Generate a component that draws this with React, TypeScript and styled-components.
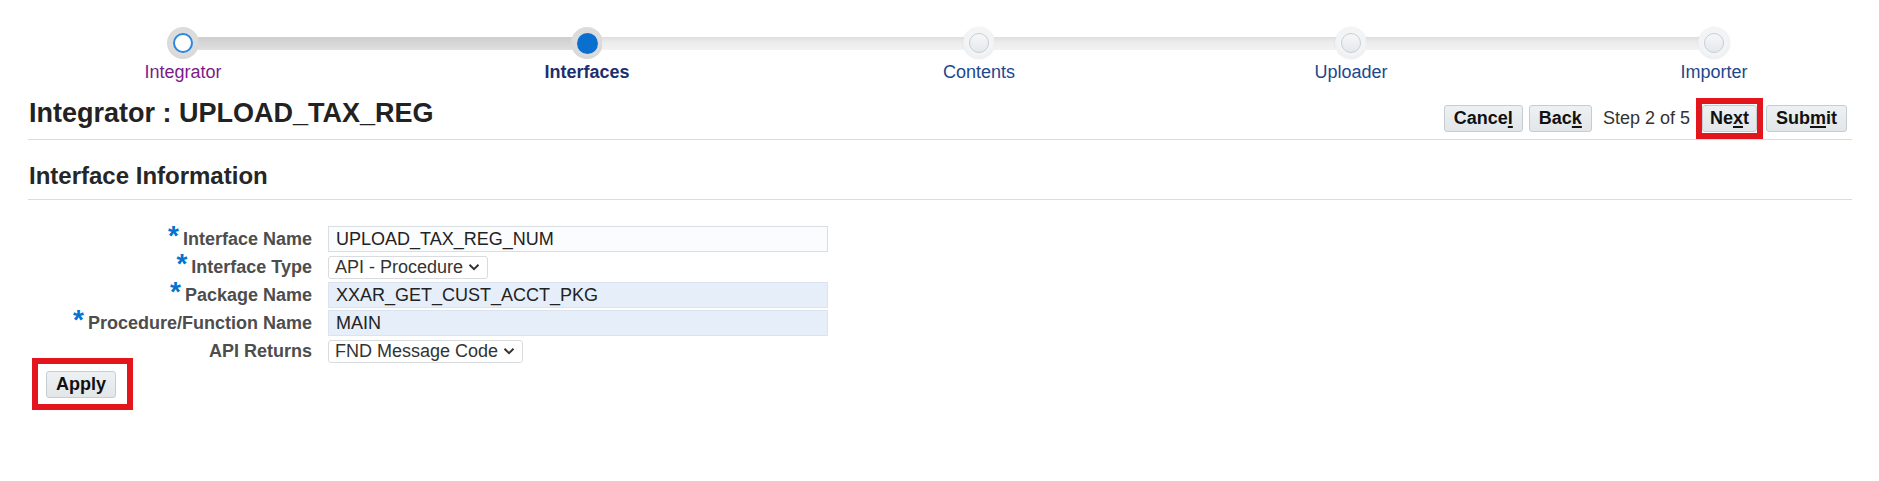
import React from "react";
import styled, { createGlobalStyle, css } from "styled-components";

const GlobalStyle = createGlobalStyle`
  html, body { margin: 0; padding: 0; background: #ffffff; }
  body { font-family: "Liberation Sans", Arial, sans-serif; color: #222; }
  * { box-sizing: border-box; }
`;

type StepState = "visited" | "current" | "future";

const Page = styled.div`
  padding: 0 27px 0 28px;
`;

const Train = styled.div`
  display: flex;
  align-items: flex-start;
  padding-top: 27px;
  margin-left: 139px;
`;

const Step = styled.div`
  display: flex;
  flex-direction: column;
  align-items: center;
  width: 32px;
  flex: none;
`;

const Knob = styled.div<{ $state: StepState }>`
  width: 32px;
  height: 32px;
  border-radius: 50%;
  display: flex;
  align-items: center;
  justify-content: center;
  ${(p) =>
    p.$state === "future"
      ? css`
          background: radial-gradient(circle at 50% 45%, #f3f4f5 55%, #e3e5e7 100%);
          box-shadow: 0 0 2px rgba(0, 0, 0, 0.08);
        `
      : css`
          background: radial-gradient(circle at 50% 45%, #dcdcdc 55%, #cfcfcf 100%);
        `}
`;

const Dot = styled.div<{ $state: StepState }>`
  border-radius: 50%;
  ${(p) =>
    p.$state === "visited"
      ? css`
          width: 20px;
          height: 20px;
          background: #ffffff;
          border: 2px solid #2d87e2;
        `
      : p.$state === "current"
      ? css`
          width: 21px;
          height: 21px;
          background: #0b6fd0;
        `
      : css`
          width: 20px;
          height: 20px;
          background: linear-gradient(#f6f7f9, #e4e8ec);
          border: 1px solid #c9ced4;
        `}
`;

const StepLabel = styled.div<{ $state: StepState }>`
  margin-top: 3px;
  font-size: 18px;
  line-height: 21px;
  white-space: nowrap;
  font-weight: ${(p) => (p.$state === "current" ? 700 : 400)};
  color: ${(p) =>
    p.$state === "visited" ? "#7a1d89" : p.$state === "current" ? "#1b2f6d" : "#21478c"};
`;

const Connector = styled.div<{ $done: boolean; $w: number }>`
  flex: none;
  width: ${(p) => p.$w}px;
  height: 32px;
  display: flex;
  align-items: center;
  margin: 0 -1px;
  &::before {
    content: "";
    display: block;
    width: 100%;
    height: 13px;
    background: ${(p) =>
      p.$done
        ? "linear-gradient(#cfcfcf, #d8d8d8 60%, #e0e0e0)"
        : "linear-gradient(#dedede, #ececec 40%, #f2f2f2)"};
  }
`;

const HeaderRow = styled.div`
  display: flex;
  align-items: flex-end;
  justify-content: space-between;
  margin-top: 15px;
  border-bottom: 1px solid #dcdcdc;
`;

const Title = styled.h1`
  margin: 0 0 10px 1px;
  font-size: 27px;
  line-height: 31px;
  font-weight: 700;
  color: #222222;
`;

const Toolbar = styled.div`
  display: flex;
  align-items: center;
  gap: 6px;
  margin-right: 5px;
`;

const Button = styled.button<{ $tight?: boolean }>`
  font-family: "Liberation Sans", Arial, sans-serif;
  font-size: 18px;
  font-weight: 700;
  line-height: 25px;
  padding: 0 ${(p) => (p.$tight ? "7px" : "9px")};
  border: 1px solid #c4cdd4;
  border-radius: 3px;
  background: linear-gradient(#eef1f3, #e2e6e9);
  color: #111111;
  cursor: pointer;
  white-space: nowrap;
  u { text-decoration-thickness: 2px; text-underline-offset: 2px; }
`;

const StepText = styled.span`
  margin-left: 5px;
  font-size: 18px;
  color: #333333;
  white-space: nowrap;
`;

const Highlight = styled.div<{ $pad: string }>`
  display: inline-flex;
  border: 6px solid #e3161e;
  padding: ${(p) => p.$pad};
`;

const NextBox = styled(Highlight)`
  margin-right: -3px;
`;

const ApplyBox = styled(Highlight)`
  margin: -7px 0 0 4px;
`;

const SectionTitle = styled.h2`
  margin: 22px 0 0 0;
  padding: 0 0 9px 1px;
  font-size: 24px;
  line-height: 28px;
  font-weight: 700;
  color: #262626;
  border-bottom: 1px solid #dcdcdc;
`;

const Form = styled.div`
  display: grid;
  grid-template-columns: 284px 500px;
  grid-auto-rows: 28px;
  column-gap: 16px;
  align-items: center;
  margin-top: 25px;
`;

const Label = styled.label`
  text-align: right;
  font-size: 18px;
  font-weight: 700;
  line-height: 28px;
  color: #4d4d4d;
  white-space: nowrap;
`;

const Req = styled.span`
  font-size: 28px;
  line-height: 0;
  color: #0572ce;
  margin-right: 4px;
`;

const TextInput = styled.input<{ $locked?: boolean }>`
  width: 500px;
  height: 26px;
  padding: 0 7px;
  font-family: "Liberation Sans", Arial, sans-serif;
  font-size: 18px;
  color: #222222;
  border: 1px solid ${(p) => (p.$locked ? "#dae3ee" : "#d9dee3")};
  background: ${(p) => (p.$locked ? "#e5eef9" : "#fbfcfd")};
  outline: none;
`;

const SelectBox = styled.div`
  justify-self: start;
  display: inline-flex;
  align-items: center;
  gap: 5px;
  height: 23px;
  padding: 0 7px 0 6px;
  border: 1px solid #d9dcdf;
  border-radius: 3px;
  background: #ffffff;
  font-size: 18px;
  color: #333333;
  white-space: nowrap;
`;

const Chevron = () => (
  <svg width="12" height="8" viewBox="0 0 12 8" aria-hidden="true">
    <path d="M1.5 1.8 L6 6.2 L10.5 1.8" fill="none" stroke="#333" strokeWidth="2" />
  </svg>
);

const steps: { name: string; state: StepState; gap?: number }[] = [
  { name: "Integrator", state: "visited" },
  { name: "Interfaces", state: "current", gap: 372 },
  { name: "Contents", state: "future", gap: 360 },
  { name: "Uploader", state: "future", gap: 340 },
  { name: "Importer", state: "future", gap: 331 },
];

export default function App() {
  return (
    <Page>
      <GlobalStyle />
      <Train>
        {steps.map((s, i) => (
          <React.Fragment key={s.name}>
            {i > 0 && <Connector $done={i === 1} $w={(s.gap ?? 0) + 2} />}
            <Step>
              <Knob $state={s.state}>
                <Dot $state={s.state} />
              </Knob>
              <StepLabel $state={s.state}>{s.name}</StepLabel>
            </Step>
          </React.Fragment>
        ))}
      </Train>

      <HeaderRow>
        <Title>Integrator : UPLOAD_TAX_REG</Title>
        <Toolbar>
          <Button>
            Cance<u>l</u>
          </Button>
          <Button>
            Bac<u>k</u>
          </Button>
          <StepText>Step 2 of 5</StepText>
          <NextBox $pad="1px 0">
            <Button $tight>
              Ne<u>x</u>t
            </Button>
          </NextBox>
          <Button>
            Sub<u>m</u>it
          </Button>
        </Toolbar>
      </HeaderRow>

      <SectionTitle>Interface Information</SectionTitle>

      <Form>
        <Label>
          <Req>*</Req>Interface Name
        </Label>
        <TextInput readOnly value="UPLOAD_TAX_REG_NUM" />

        <Label>
          <Req>*</Req>Interface Type
        </Label>
        <SelectBox>
          API - Procedure <Chevron />
        </SelectBox>

        <Label>
          <Req>*</Req>Package Name
        </Label>
        <TextInput $locked readOnly value="XXAR_GET_CUST_ACCT_PKG" />

        <Label>
          <Req>*</Req>Procedure/Function Name
        </Label>
        <TextInput $locked readOnly value="MAIN" />

        <Label>API Returns</Label>
        <SelectBox>
          FND Message Code <Chevron />
        </SelectBox>
      </Form>

      <ApplyBox $pad="7px 11px 6px 8px">
        <Button>Apply</Button>
      </ApplyBox>
    </Page>
  );
}
